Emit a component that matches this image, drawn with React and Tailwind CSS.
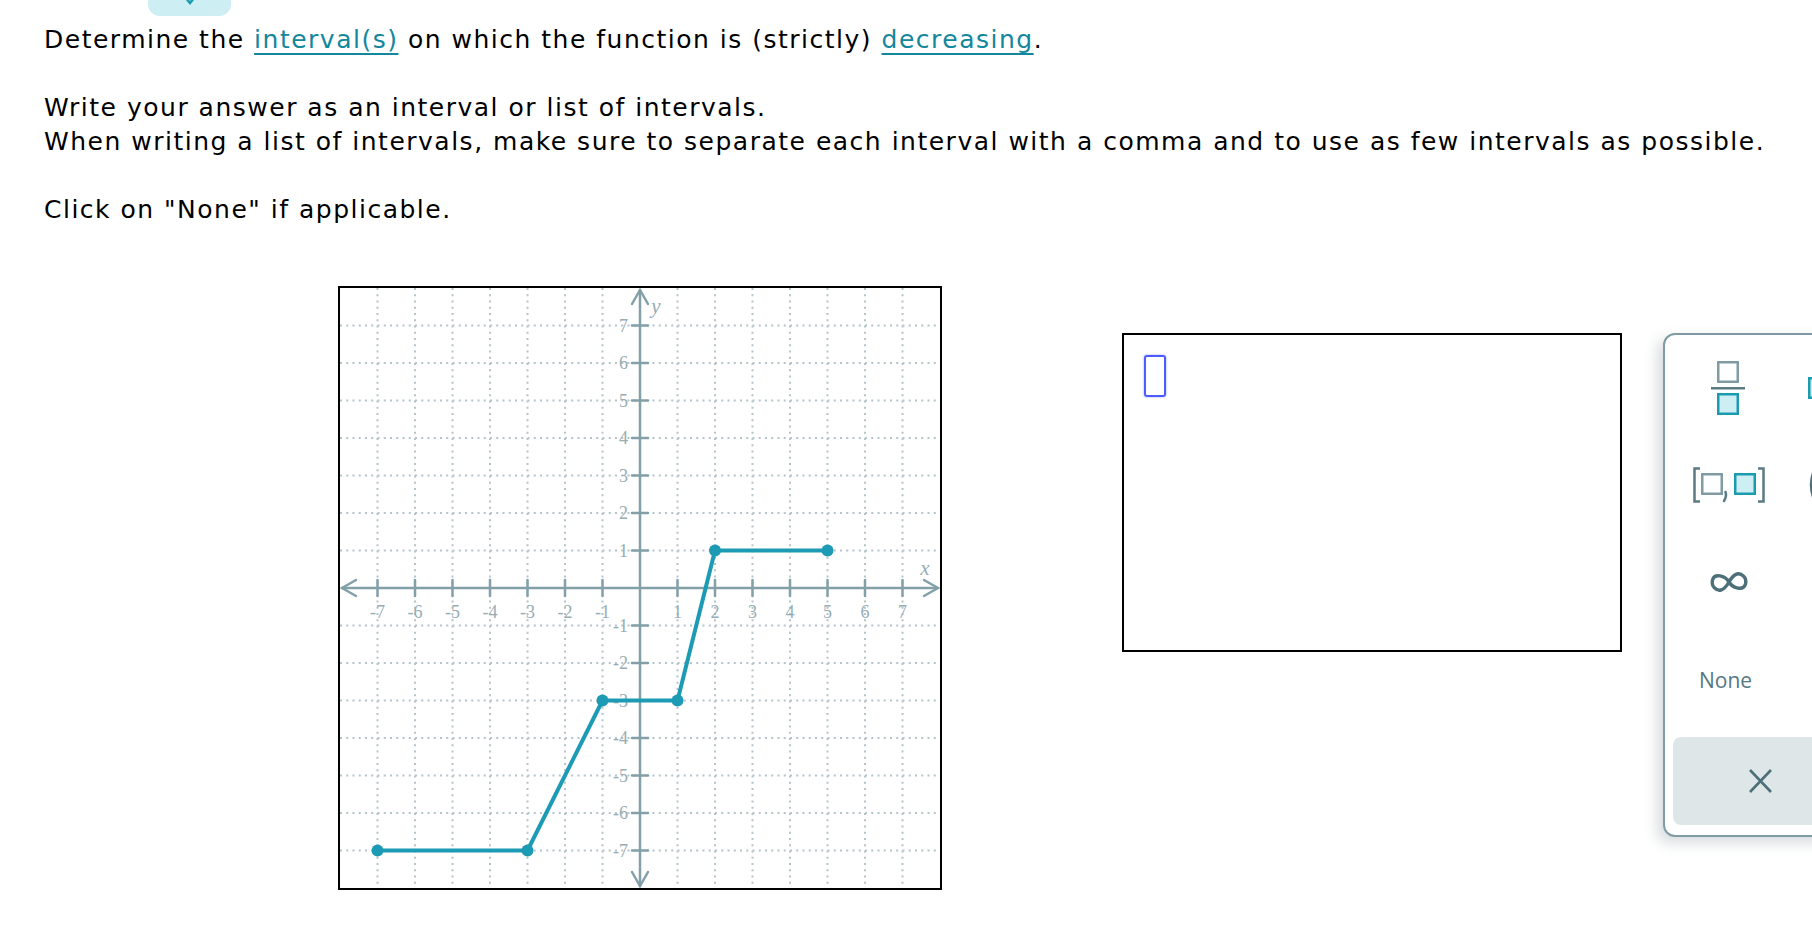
import React from 'react';

const U = 37.5;
const px = (x) => 300 + U * x;
const py = (y) => 300 - U * y;
const ticks = [-7, -6, -5, -4, -3, -2, -1, 1, 2, 3, 4, 5, 6, 7];
const points = [[-7, -7], [-3, -7], [-1, -3], [1, -3], [2, 1], [5, 1]];

function Graph() {
  const axis = '#83a0a8';
  const label = '#97adb3';
  return (
    <div className="w-[604px] h-[604px] border-2 border-black bg-white shrink-0">
      <svg width="600" height="600" viewBox="0 0 600 600">
        {/* dotted grid */}
        {ticks.map((t) => (
          <g key={'g' + t} stroke="#b5c4c9" strokeWidth="2" strokeDasharray="2 4.25">
            <line x1={px(t)} y1="0" x2={px(t)} y2="600" />
            <line x1="0" y1={py(t)} x2="600" y2={py(t)} />
          </g>
        ))}
        {/* axes */}
        <g stroke={axis} strokeWidth="2.5" fill="none" strokeLinecap="round">
          <line x1="2" y1="300" x2="598" y2="300" />
          <line x1="300" y1="2" x2="300" y2="598" />
          <polyline points="16,292 2,300 16,308" />
          <polyline points="584,292 598,300 584,308" />
          <polyline points="292,16 300,2 308,16" />
          <polyline points="292,584 300,598 308,584" />
          {ticks.map((t) => (
            <g key={'t' + t}>
              <line x1={px(t)} y1="292" x2={px(t)} y2="308" />
              <line x1="292" y1={py(t)} x2="308" y2={py(t)} />
            </g>
          ))}
        </g>
        {/* labels */}
        <g fill={label} fontFamily="'Liberation Serif', serif" fontSize="18">
          {ticks.map((t) => (
            <g key={'l' + t}>
              <text x={px(t)} y="330" textAnchor="middle">{t < 0 ? '-' + Math.abs(t) : t}</text>
              <text x="288" y={py(t) + 6} textAnchor="end">{t < 0 ? '-' + Math.abs(t) : t}</text>
            </g>
          ))}
          <text x="316" y="25" fontStyle="italic" fontSize="21" textAnchor="middle">y</text>
          <text x="585" y="287" fontStyle="italic" fontSize="21" textAnchor="middle">x</text>
        </g>
        {/* function */}
        <polyline
          points={points.map(([x, y]) => `${px(x)},${py(y)}`).join(' ')}
          fill="none"
          stroke="#1d9bb4"
          strokeWidth="4"
          strokeLinejoin="round"
        />
        {points.map(([x, y]) => (
          <circle key={x} cx={px(x)} cy={py(y)} r="6" fill="#1d9bb4" />
        ))}
      </svg>
    </div>
  );
}

function FractionIcon() {
  return (
    <svg width="36" height="54" viewBox="0 0 36 54">
      <rect x="7.25" y="1.25" width="19.5" height="19.5" fill="white" stroke="#7f9ba3" strokeWidth="2.5" />
      <rect x="0" y="26" width="34" height="2.5" fill="#5a7a84" />
      <rect x="7.25" y="33.25" width="19.5" height="19.5" fill="#cdeef3" stroke="#1a9bb0" strokeWidth="2.5" />
    </svg>
  );
}

function IntervalIcon() {
  return (
    <svg width="74" height="36" viewBox="0 0 74 36">
      <path d="M8 1.5 H2.5 V34.5 H8" fill="none" stroke="#5a7a84" strokeWidth="2.5" />
      <rect x="10.25" y="7.25" width="19.5" height="19.5" fill="white" stroke="#7f9ba3" strokeWidth="2.5" />
      <path d="M33.5 25 Q35 29 32 34" fill="none" stroke="#5a7a84" strokeWidth="2.5" strokeLinecap="round" />
      <rect x="43.25" y="7.25" width="19.5" height="19.5" fill="#cdeef3" stroke="#1a9bb0" strokeWidth="2.5" />
      <path d="M66 1.5 H71.5 V34.5 H66" fill="none" stroke="#5a7a84" strokeWidth="2.5" />
    </svg>
  );
}

export default function App() {
  return (
    <div className="relative w-full h-[932px] overflow-hidden bg-white pl-[44px] font-['DejaVu_Sans',sans-serif] text-black">
      {/* top tab */}
      <div className="ml-[104px] w-[83px] h-[16px] rounded-b-[12px] bg-[#cdeef3] flex justify-center">
        <svg width="14" height="6" viewBox="0 0 14 6">
          <polyline points="3,-2 7,3 11,-2" fill="none" stroke="#1a9bb0" strokeWidth="2.5" />
        </svg>
      </div>

      {/* prompt */}
      <div className="mt-[7px] text-[25px] leading-[34px] tracking-[1.5px]">
        <p>
          Determine the{' '}
          <span className="text-[#13879c] underline decoration-[2px] underline-offset-[5px]">interval(s)</span>{' '}
          on which the function is (strictly){' '}
          <span className="text-[#13879c] underline decoration-[2px] underline-offset-[5px]">decreasing</span>.
        </p>
        <p className="mt-[34px]">Write your answer as an interval or list of intervals.</p>
        <p>When writing a list of intervals, make sure to separate each interval with a comma and to use as few intervals as possible.</p>
        <p className="mt-[34px]">Click on "None" if applicable.</p>
      </div>

      {/* work area */}
      <div className="mt-[59px] flex items-start">
        <div className="ml-[294px]">
          <Graph />
        </div>

        <div className="ml-[180px] mt-[47px] w-[500px] h-[319px] border-2 border-black pl-[20px] pt-[20px] shrink-0">
          <div className="w-[22px] h-[42px] border-2 border-[#4c5cff] rounded-[3px] shadow-[0_0_2px_rgba(76,92,255,0.7)]" />
        </div>

        <div className="ml-[41px] mt-[47px] w-[300px] shrink-0 rounded-[12px] border-2 border-[#7f9ba3] bg-white pt-[4px] pb-[10px] shadow-[-6px_6px_14px_rgba(60,80,90,0.2)]">
          <div className="grid grid-cols-[128px_114px]">
            <div className="h-[97px] flex items-center justify-center">
              <FractionIcon />
            </div>
            <div className="h-[97px] flex items-center pl-[15px]">
              <svg width="84" height="22" viewBox="0 0 84 22">
                <rect x="1.25" y="1.25" width="19.5" height="19.5" fill="#cdeef3" stroke="#1a9bb0" strokeWidth="2.5" />
              </svg>
            </div>

            <div className="h-[97px] flex items-center justify-center">
              <IntervalIcon />
            </div>
            <div className="h-[97px] flex items-center pl-[14px]">
              <svg width="74" height="36" viewBox="0 0 74 36">
                <path d="M8 1 Q0 18 8 35" fill="none" stroke="#4d6f79" strokeWidth="2.5" />
              </svg>
            </div>

            <div className="h-[97px] flex items-center justify-center">
              <svg width="40" height="22" viewBox="0 0 40 22">
                <path
                  d="M20 11 C16 4.5 5.5 2 3.5 9 C1.8 16 8 20 12 19 C15.5 18.2 18 14.5 20 11 C22 7.5 24.5 3.8 28 3 C32 2 38.2 6 36.5 13 C34.5 20 24 17.5 20 11 Z"
                  fill="none"
                  stroke="#4d6f79"
                  strokeWidth="3.4"
                />
              </svg>
            </div>
            <div className="h-[97px]" />

            <div className="h-[97px] flex items-center justify-center pt-[4px] pr-[7px]">
              <span className="font-['Open_Sans',sans-serif] text-[21px] text-[#557780]">None</span>
            </div>
            <div className="h-[97px]" />
          </div>

          <div className="mt-[10px] ml-[8px] h-[88px] w-[280px] rounded-[8px] bg-[#dfe6e8] flex items-center pl-[75px]">
            <svg width="25" height="24" viewBox="0 0 25 24">
              <path d="M2 1 L23 23 M23 1 L2 23" stroke="#4d6f79" strokeWidth="2.6" />
            </svg>
          </div>
        </div>
      </div>
    </div>
  );
}
